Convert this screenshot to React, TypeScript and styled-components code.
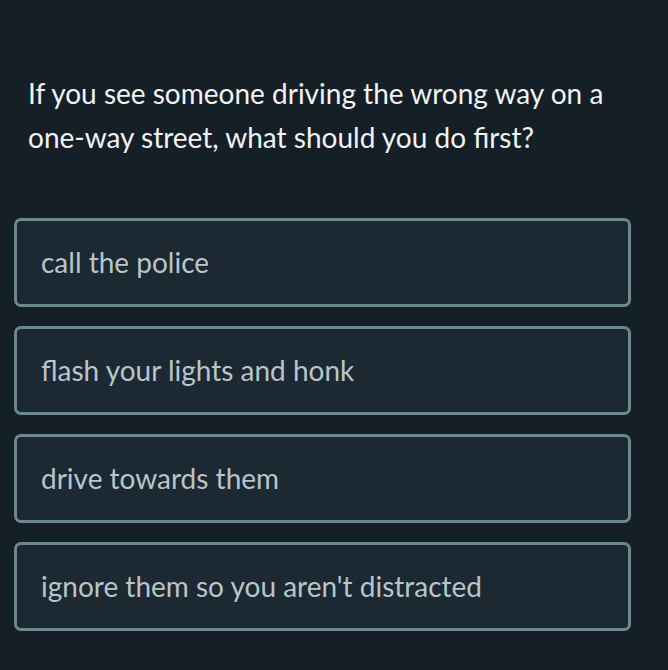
import React from "react";
import styled, { createGlobalStyle } from "styled-components";

const GlobalStyle = createGlobalStyle`
  html, body {
    margin: 0;
    padding: 0;
    background: #151f26;
  }
  body {
    font-family: Lato, "Noto Sans", sans-serif;
  }
`;

const Page = styled.div`
  width: 668px;
  height: 670px;
  box-sizing: border-box;
  padding: 71px 0 0 14px;
  background: #151f26;
`;

const Question = styled.h1`
  margin: 0 0 59px 14px;
  font-size: 28px;
  font-weight: 400;
  line-height: 44px;
  color: #f1f3f4;
  width: 610px;
`;

const Options = styled.div`
  display: flex;
  flex-direction: column;
  gap: 19px;
  width: 617px;
`;

const Option = styled.button`
  display: flex;
  align-items: center;
  box-sizing: border-box;
  height: 89px;
  padding: 0 24px 2px;
  background: #1c2832;
  border: 3px solid #6c8991;
  border-radius: 7px;
  font-family: Lato, "Noto Sans", sans-serif;
  font-size: 28px;
  color: #b8c5ca;
  text-align: left;
  cursor: pointer;
`;

const answers = [
  "call the police",
  "flash your lights and honk",
  "drive towards them",
  "ignore them so you aren't distracted",
];

export default function App() {
  return (
    <>
      <GlobalStyle />
      <Page>
        <Question>
          If you see someone driving the wrong way on a<br />
          one-way street, what should you do first?
        </Question>
        <Options>
          {answers.map((a) => (
            <Option key={a}>{a}</Option>
          ))}
        </Options>
      </Page>
    </>
  );
}
